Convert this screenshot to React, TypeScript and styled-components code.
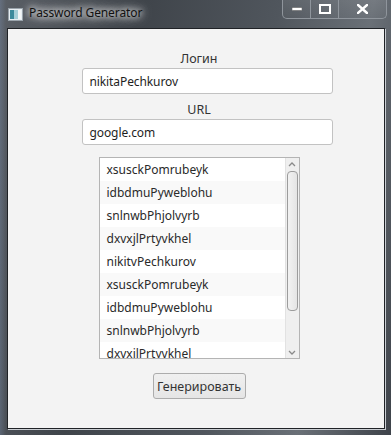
import React from 'react';
import styled, { createGlobalStyle } from 'styled-components';

const GlobalStyle = createGlobalStyle`
  html, body {
    margin: 0;
    padding: 0;
    width: 391px;
    height: 435px;
    overflow: hidden;
    background: #3c4147;
  }
  * { box-sizing: border-box; }
`;

const Frame = styled.div`
  width: 391px;
  height: 435px;
  display: flex;
  flex-direction: column;
  padding: 0 6px 6px 7px;
  background:
    linear-gradient(90deg, rgba(120, 140, 170, 0.35) 0px, rgba(0, 0, 0, 0) 6px),
    linear-gradient(100deg, #5a5f66 0%, #3f444a 30%, #50565d 60%, #6a7077 80%, #3e434a 100%);
  font-family: 'Noto Sans', 'Open Sans', sans-serif;
`;

const TitleBar = styled.div`
  height: 27px;
  display: flex;
  align-items: flex-start;
  position: relative;
`;

const AppIcon = styled.svg`
  margin: 8px 0 0 1px;
  flex: none;
`;

const Title = styled.span`
  margin: 5px 0 0 6px;
  font-size: 12px;
  letter-spacing: -0.1px;
  color: #111;
  line-height: 16px;
  text-shadow: 0 0 6px #fff, 0 0 10px rgba(255, 255, 255, 0.9), 0 0 14px rgba(255, 255, 255, 0.7);
`;

const Controls = styled.div`
  position: absolute;
  top: -1px;
  right: -2px;
  display: flex;
  height: 20px;
  border: 1px solid #8f959c;
  border-top: none;
  border-radius: 0 0 5px 5px;
  overflow: hidden;
  background: linear-gradient(180deg, rgba(255, 255, 255, 0.08), rgba(255, 255, 255, 0.02));
`;

const ControlButton = styled.div<{ $w: number; $last?: boolean }>`
  width: ${(p) => p.$w}px;
  height: 100%;
  display: flex;
  align-items: center;
  justify-content: center;
  border-right: ${(p) => (p.$last ? 'none' : '1px solid #8f959c')};
`;

const Client = styled.div`
  flex: 1;
  margin-top: 1px;
  background: #f3f3f3;
  border: 1px solid #1f2226;
  box-shadow: 1px 1px 0 #c9cdd2;
  display: flex;
  flex-direction: column;
  align-items: center;
  padding: 22px 0 0 6px;
`;

const Label = styled.div`
  font-size: 12.5px;
  color: #333;
  line-height: 16px;
  margin-bottom: 1px;
`;

const TextInput = styled.div`
  width: 251px;
  height: 26px;
  margin: 0 0 8px 16px;
  background: #fff;
  border: 1px solid #c2c2c2;
  border-radius: 3px;
  padding: 0 7px;
  display: flex;
  align-items: center;
  font-size: 12px;
  letter-spacing: -0.1px;
  color: #1e1e1e;
`;

const List = styled.div`
  margin-top: 4px;
  width: 201px;
  height: 202px;
  border: 1px solid #b4b4b4;
  background: #fff;
  display: flex;
  overflow: hidden;
`;

const Items = styled.div`
  flex: 1;
  overflow: hidden;
`;

const Item = styled.div<{ $alt: boolean }>`
  height: 23px;
  line-height: 23px;
  padding-left: 7px;
  font-size: 12px;
  color: #2a2a2a;
  background: ${(p) => (p.$alt ? '#f9f9f9' : '#fff')};
  white-space: nowrap;
`;

const ScrollBar = styled.div`
  width: 14px;
  background: #efefef;
  border-left: 1px solid #e2e2e2;
  display: flex;
  flex-direction: column;
  align-items: center;
`;

const Arrow = styled.div`
  height: 12px;
  display: flex;
  align-items: center;
  justify-content: center;
`;

const Thumb = styled.div`
  width: 11px;
  height: 140px;
  margin-top: 1px;
  border: 1px solid #9c9c9c;
  border-radius: 4px;
  background: linear-gradient(90deg, #f2f2f2, #e4e4e4);
`;

const Spacer = styled.div`
  flex: 1;
`;

const Button = styled.div`
  margin-top: 14px;
  width: 93px;
  height: 26px;
  border: 1px solid #acacac;
  border-radius: 3px;
  background: linear-gradient(180deg, #f0f0f0 0%, #e5e5e5 100%);
  display: flex;
  align-items: center;
  justify-content: center;
  font-size: 12.5px;
  color: #333;
`;

const passwords = [
  'xsusckPomrubeyk',
  'idbdmuPyweblohu',
  'snlnwbPhjolvyrb',
  'dxvxjlPrtyvkhel',
  'nikitvPechkurov',
  'xsusckPomrubeyk',
  'idbdmuPyweblohu',
  'snlnwbPhjolvyrb',
  'dxvxjlPrtyvkhel',
];

export default function App() {
  return (
    <>
      <GlobalStyle />
      <Frame>
        <TitleBar>
          <AppIcon width="15" height="13" viewBox="0 0 15 13">
            <rect x="0.5" y="0.5" width="14" height="12" fill="#e8eef2" stroke="#9aa3ab" />
            <rect x="2" y="2" width="4" height="9" fill="#3d8a9c" />
            <rect x="6" y="2" width="4" height="9" fill="#a7cfd8" />
            <rect x="10" y="2" width="3" height="9" fill="#f4f6f7" />
          </AppIcon>
          <Title>Password Generator</Title>
          <Controls>
            <ControlButton $w={28}>
              <svg width="10" height="4" viewBox="0 0 10 4">
                <rect x="0" y="0.5" width="10" height="3" fill="#fff" stroke="#555" strokeWidth="0.5" />
              </svg>
            </ControlButton>
            <ControlButton $w={28}>
              <svg width="12" height="10" viewBox="0 0 12 10">
                <rect x="1" y="1" width="10" height="8" fill="none" stroke="#fff" strokeWidth="2" />
              </svg>
            </ControlButton>
            <ControlButton $w={47} $last>
              <svg width="11" height="10" viewBox="0 0 11 10">
                <path d="M1 1 L10 9 M10 1 L1 9" stroke="#fff" strokeWidth="2.4" strokeLinecap="square" />
              </svg>
            </ControlButton>
          </Controls>
        </TitleBar>
        <Client>
          <Label>Логин</Label>
          <TextInput>nikitaPechkurov</TextInput>
          <Label>URL</Label>
          <TextInput>google.com</TextInput>
          <List>
            <Items>
              {passwords.map((p, i) => (
                <Item key={i} $alt={i % 2 === 1}>
                  {p}
                </Item>
              ))}
            </Items>
            <ScrollBar>
              <Arrow>
                <svg width="8" height="5" viewBox="0 0 8 5">
                  <path d="M1 4 L4 1 L7 4" fill="none" stroke="#8a8a8a" strokeWidth="1.3" />
                </svg>
              </Arrow>
              <Thumb />
              <Spacer />
              <Arrow>
                <svg width="8" height="5" viewBox="0 0 8 5">
                  <path d="M1 1 L4 4 L7 1" fill="none" stroke="#8a8a8a" strokeWidth="1.3" />
                </svg>
              </Arrow>
            </ScrollBar>
          </List>
          <Button>Генерировать</Button>
        </Client>
      </Frame>
    </>
  );
}
